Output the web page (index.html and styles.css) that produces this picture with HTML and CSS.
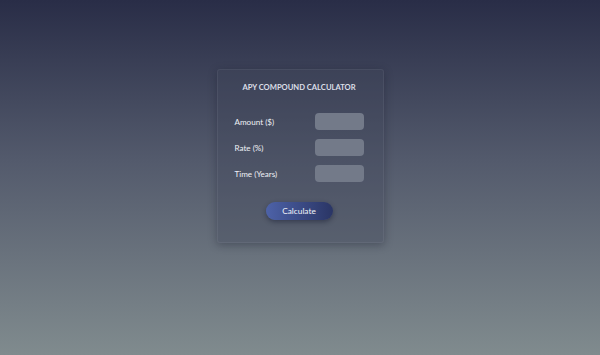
FILE: index.html
```html
<!DOCTYPE html>
<html lang="en">
<head>
    <meta charset="UTF-8">
    <meta name="viewport" content="width=device-width, initial-scale=1.0">
    <title>APY Compound Calculator</title>
    <link rel="stylesheet" href="styles.css">
</head>
<body>

    <!-- APY calculator card -->
    <div class="card">
        <h2>APY Compound Calculator</h2>

        <div class="row">
            <label for="amount">Amount ($)</label>
            <input type="number" id="amount">
        </div>
        <div class="row">
            <label for="rate">Rate (%)</label>
            <input type="number" id="rate">
        </div>
        <div class="row">
            <label for="time">Time (Years)</label>
            <input type="number" id="time">
        </div>

        <button>Calculate</button>
    </div>

</body>
</html>
```

FILE: styles.css
```css
html, body {
    height: 100%;
}
body {
    font-family: Lato, "Open Sans", sans-serif;
    margin: 0;
    background: linear-gradient(to bottom, #292d47 0%, #535a6c 45%, #808b8e 100%);
    color: #e8eaf0;
    display: flex;
    justify-content: center;
    align-items: flex-start;
}
.card {
    width: 167px;
    box-sizing: border-box;
    margin-top: 69px;
    padding: 12px 19px 22px 17px;
    background-color: rgba(62, 68, 88, 0.35);
    border: 1px solid rgba(255, 255, 255, 0.06);
    border-radius: 3px;
    box-shadow: 0 2px 8px rgba(20, 24, 40, 0.35);
}
h2 {
    margin: 0 0 20px;
    text-align: center;
    white-space: nowrap;
    font-size: 7.6px;
    font-weight: 700;
    letter-spacing: 0;
    text-transform: uppercase;
    color: #dcdfe8;
    line-height: 11px;
}
.row {
    display: flex;
    justify-content: space-between;
    align-items: center;
    margin-bottom: 9px;
}
.row label {
    font-size: 8.1px;
    color: #eef0f5;
}
.row input {
    width: 49px;
    height: 17px;
    box-sizing: border-box;
    border: none;
    border-radius: 4px;
    background-color: #737a89;
    padding: 0 4px;
}
button {
    display: block;
    margin: 20px auto 0;
    width: 67px;
    height: 18px;
    border: none;
    border-radius: 9px;
    background: linear-gradient(to right, #4d62a8, #2a3565);
    color: #f2f4fa;
    font-family: Lato, "Open Sans", sans-serif;
    font-size: 8.3px;
    box-shadow: 0 2px 5px rgba(15, 20, 45, 0.45);
    cursor: pointer;
}
```
